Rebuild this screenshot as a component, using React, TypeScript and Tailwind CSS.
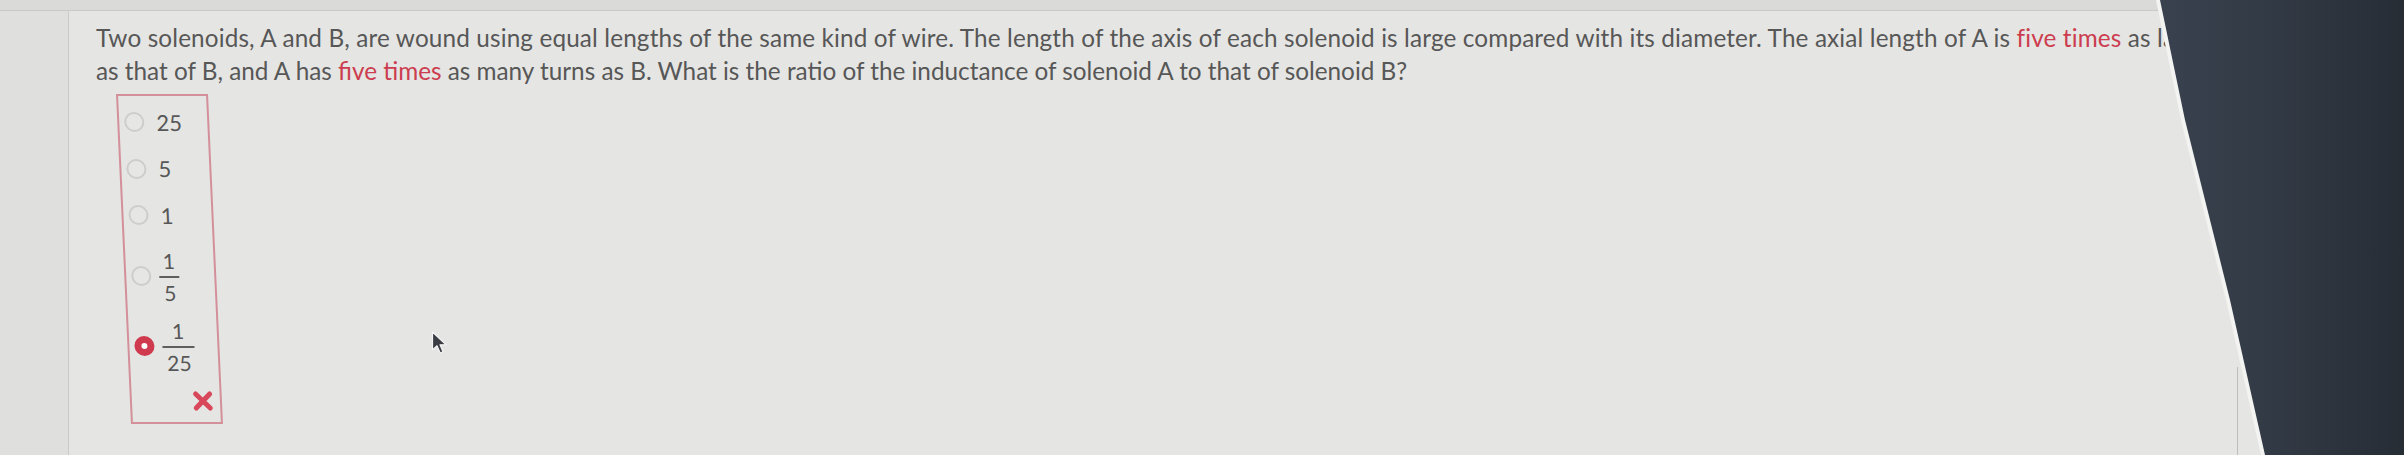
import React from 'react';

// 单个选项的单选圆圈
const Radio: React.FC<{ checked?: boolean }> = ({ checked }) =>
  checked ? (
    <span className="block h-5 w-5 shrink-0 rounded-full border-[7px] border-[#cf3a4e] bg-white" />
  ) : (
    <span className="block h-5 w-5 shrink-0 rounded-full border-2 border-[#cdcdcb] bg-[#e6e6e4]" />
  );

const Fraction: React.FC<{ num: string; den: string }> = ({ num, den }) => (
  <span className="inline-flex flex-col items-center text-[21px] leading-[30px]">
    <span className="px-[4px]">{num}</span>
    <span className="h-[2px] w-full bg-[#5f5f5f]" />
    <span className="px-[4px]">{den}</span>
  </span>
);

const Choice: React.FC<{ height: string; checked?: boolean; children: React.ReactNode }> = ({
  height,
  checked,
  children,
}) => (
  <div className={`flex items-center gap-[12px] pl-[5px] ${height}`}>
    <Radio checked={checked} />
    {children}
  </div>
);

export default function App() {
  return (
    <div className="relative h-[455px] w-[2404px] overflow-hidden bg-[#e5e5e3] font-['Lato','Noto_Sans',sans-serif] text-[#575757]">
      {/* 顶部条 */}
      <div className="h-[11px] border-b border-[#c9c9c7] bg-[#dadad8]" />

      <div className="flex h-[444px]">
        {/* 左侧栏 */}
        <div className="w-[69px] border-r border-[#cacac8] bg-[#dfdfdd]" />

        {/* 题目 */}
        <div className="flex-1 pl-[27px] pt-[10px]">
          <div className="whitespace-nowrap text-[24.3px] leading-[33px]">
            <div className="tracking-[0.14px]">
              Two solenoids, A and B, are wound using equal lengths of the same kind of wire. The length of the axis of
              each solenoid is large compared with its diameter. The axial length of A is{' '}
              <span className="text-[#cc3d4f]">five times</span> as large
            </div>
            <div>
              as that of B, and A has <span className="text-[#cc3d4f]">five times</span> as many turns as B. What is the
              ratio of the inductance of solenoid A to that of solenoid B?
            </div>
          </div>

          {/* 选项 */}
          <div className="ml-[20px] mt-[7px] h-[330px] w-[92px] origin-top-left skew-x-[2.6deg] border-2 border-[#d3909a] pt-[3px] text-[22px]">
            <Choice height="h-[46px]">25</Choice>
            <Choice height="h-[47px]">5</Choice>
            <Choice height="h-[46px]">1</Choice>
            <Choice height="h-[76px]">
              <span className="-ml-[4px]">
                <Fraction num="1" den="5" />
              </span>
            </Choice>
            <Choice height="h-[64px]" checked>
              <span className="-ml-[4px]">
                <Fraction num="1" den="25" />
              </span>
            </Choice>
            <div className="mt-[12px] flex justify-end pr-[6px]">
              <svg width="22" height="22" viewBox="0 0 22 22">
                <path d="M4 4 L18 18 M18 4 L4 18" stroke="#d8485a" strokeWidth="5" strokeLinecap="round" />
              </svg>
            </div>
          </div>
        </div>
      </div>

      {/* 鼠标指针 */}
      <svg className="absolute left-[431px] top-[331px]" width="18" height="26" viewBox="0 0 18 26">
        <path
          d="M1.5 1 L1.5 19 L6 14.8 L9.2 22 L12 20.8 L9 13.8 L14.8 13.6 Z"
          fill="#3a3d44"
          stroke="#f4f4f4"
          strokeWidth="1.2"
          strokeLinejoin="round"
        />
      </svg>

      {/* 照片右侧的深色遮挡 */}
      <div className="absolute left-[2237px] top-[367px] h-[88px] w-px bg-[#bdbdbb]" />
      <div className="absolute left-[2134px] top-0 h-[455px] w-[270px] bg-[#f3f3f1] [clip-path:polygon(22px_0,100%_0,100%_100%,127px_100%,92px_300px,47px_120px)]" />
      <div className="absolute left-[2137px] top-0 h-[455px] w-[267px] bg-linear-to-r from-[#3a4350] via-[#323a45] to-[#272d35] [clip-path:polygon(23px_0,100%_0,100%_100%,128px_100%,93px_300px,48px_120px)]" />
    </div>
  );
}
